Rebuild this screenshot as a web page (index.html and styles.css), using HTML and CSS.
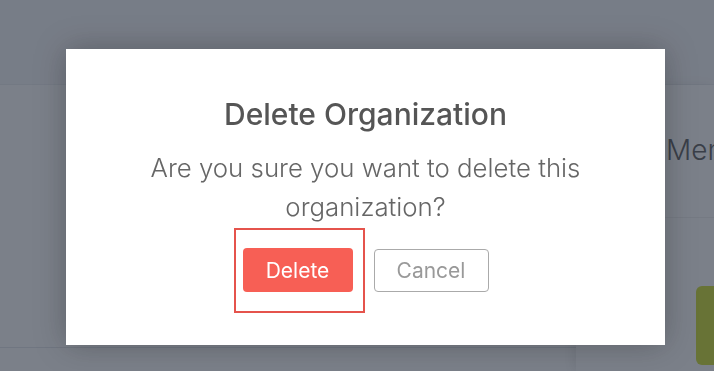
FILE: index.html
```html
<!DOCTYPE html>
<html lang="en">
<head>
  <meta charset="UTF-8">
  <meta name="viewport" content="width=device-width, initial-scale=1.0">
  <title>Organizations</title>
  <link rel="stylesheet" href="styles.css">
</head>
<body>
  <div class="page">
    <header class="topbar"></header>
    <div class="main">
      <div class="content"></div>
      <aside class="panel">
        <h2 class="panel-title">Members</h2>
        <div class="panel-body">
          <button class="panel-btn" type="button" aria-label="Add member"></button>
        </div>
      </aside>
    </div>
  </div>

  <!-- Modal konfirmasi hapus -->
  <div class="overlay">
    <div class="modal">
      <h3 class="modal-title">Delete Organization</h3>
      <p class="modal-text">Are you sure you want to delete this organization?</p>
      <div class="modal-actions">
        <button type="button" class="btn btn-danger">Delete</button>
        <button type="button" class="btn btn-outline">Cancel</button>
      </div>
    </div>
  </div>
</body>
</html>
```

FILE: styles.css
```css
body {
  margin: 0;
  font-family: Inter, "Noto Sans", sans-serif;
  background: #fff;
  overflow: hidden;
}
.page {
  height: 371px;
  display: flex;
  flex-direction: column;
}
.topbar {
  height: 84px;
  background: #f6f7f9;
  border-bottom: 1px solid #eceef1;
}
.main {
  flex: 1;
  display: flex;
}
.content {
  flex: 1;
  border-bottom: 1px solid #e4e6ea;
  height: 262px;
}
.panel {
  width: 138px;
  background: #fff;
  box-shadow: -4px 0 10px rgba(0, 0, 0, 0.08);
  overflow: hidden;
}
.panel-title {
  margin: 0;
  padding: 48px 0 0 90px;
  height: 133px;
  box-sizing: border-box;
  font-size: 28px;
  font-weight: 300;
  color: #5d5d5d;
  white-space: nowrap;
  border-bottom: 1px solid #f0f0f0;
}
.panel-body {
  padding: 68px 0 0 120px;
}
.panel-btn {
  display: block;
  width: 60px;
  height: 79px;
  border: none;
  border-radius: 6px;
  background: #cfdf30;
}

/* Overlay & modal */
.overlay {
  position: fixed;
  top: 0;
  left: 0;
  right: 0;
  bottom: 0;
  background: rgba(35, 43, 58, 0.6);
  padding: 49px 0 0 66px;
}
.modal {
  width: 599px;
  height: 296px;
  box-sizing: border-box;
  background: #fff;
  box-shadow: 0 0 30px rgba(0, 0, 0, 0.25);
  text-align: center;
  padding-top: 47px;
}
.modal-title {
  margin: 0;
  font-size: 30px;
  font-weight: 500;
  color: #555;
  line-height: 36px;
}
.modal-text {
  margin: 16px auto 0;
  width: 470px;
  font-size: 25.8px;
  font-weight: 300;
  color: #666;
  line-height: 39px;
}
.modal-actions {
  display: flex;
  justify-content: center;
  gap: 21px;
  margin-top: 22px;
}
.btn {
  font-family: Inter, "Noto Sans", sans-serif;
  font-size: 21px;
  border-radius: 4px;
  cursor: pointer;
}
.btn-danger {
  position: relative;
  width: 110px;
  height: 44px;
  border: none;
  background: #f75f55;
  color: #fff;
}
.btn-danger::after {
  content: "";
  position: absolute;
  top: -20px;
  left: -9px;
  right: -12px;
  bottom: -21px;
  border: 2px solid #e5534c;
}
.btn-outline {
  width: 115px;
  height: 43px;
  margin-top: 1px;
  border: 1px solid #aaa;
  background: #fff;
  color: #999;
}
```
